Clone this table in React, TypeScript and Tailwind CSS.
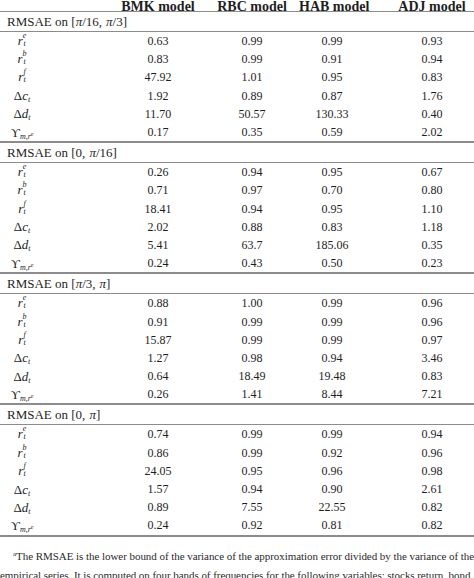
import React from "react";

const serif = { fontFamily: '"Liberation Serif", "DejaVu Serif", serif' };

function R({ sup }: { sup: string }) {
  return (
    <span className="italic">
      r
      <span className="inline-flex flex-col align-middle text-[8px] leading-[8px] not-italic -mt-[4px]">
        <span className="italic">{sup}</span>
        <span className="italic">t</span>
      </span>
    </span>
  );
}

function Delta({ v }: { v: string }) {
  return (
    <span>
      Δ<span className="italic">{v}</span>
      <sub className="italic text-[8px]">t</sub>
    </span>
  );
}

const Ups = (
  <span>
    ϒ
    <sub className="italic text-[8px]">
      m,r<sup className="text-[6px]">e</sup>
    </sub>
  </span>
);

const labels = [<R sup="e" />, <R sup="b" />, <R sup="f" />, <Delta v="c" />, <Delta v="d" />, Ups];

// second member of an interval, with the thin space LaTeX puts after the comma
const Pi = ({ tail = "" }: { tail?: string }) => (
  <>
    <i className="ml-[4px]">π</i>
    {tail}
  </>
);

const sections: { title: React.ReactNode; values: string[][] }[] = [
  {
    title: (
      <>
        RMSAE on [<i>π</i>/16,
        <Pi tail="/3]" />
      </>
    ),
    values: [
      ["0.63", "0.99", "0.99", "0.93"],
      ["0.83", "0.99", "0.91", "0.94"],
      ["47.92", "1.01", "0.95", "0.83"],
      ["1.92", "0.89", "0.87", "1.76"],
      ["11.70", "50.57", "130.33", "0.40"],
      ["0.17", "0.35", "0.59", "2.02"],
    ],
  },
  {
    title: (
      <>
        RMSAE on [0,
        <Pi tail="/16]" />
      </>
    ),
    values: [
      ["0.26", "0.94", "0.95", "0.67"],
      ["0.71", "0.97", "0.70", "0.80"],
      ["18.41", "0.94", "0.95", "1.10"],
      ["2.02", "0.88", "0.83", "1.18"],
      ["5.41", "63.7", "185.06", "0.35"],
      ["0.24", "0.43", "0.50", "0.23"],
    ],
  },
  {
    title: (
      <>
        RMSAE on [<i>π</i>/3,
        <Pi tail="]" />
      </>
    ),
    values: [
      ["0.88", "1.00", "0.99", "0.96"],
      ["0.91", "0.99", "0.99", "0.96"],
      ["15.87", "0.99", "0.99", "0.97"],
      ["1.27", "0.98", "0.94", "3.46"],
      ["0.64", "18.49", "19.48", "0.83"],
      ["0.26", "1.41", "8.44", "7.21"],
    ],
  },
  {
    title: (
      <>
        RMSAE on [0,
        <Pi tail="]" />
      </>
    ),
    values: [
      ["0.74", "0.99", "0.99", "0.94"],
      ["0.86", "0.99", "0.92", "0.96"],
      ["24.05", "0.95", "0.96", "0.98"],
      ["1.57", "0.94", "0.90", "2.61"],
      ["0.89", "7.55", "22.55", "0.82"],
      ["0.24", "0.92", "0.81", "0.82"],
    ],
  },
];

const grid = "grid grid-cols-[111px_94px_94px_66px_134px]";

export default function App() {
  return (
    <div className="w-[474px] h-[578px] overflow-hidden bg-white text-[#1e1e1e]" style={serif}>
      {/* header */}
      <div className={`${grid} h-[12px] items-end border-b border-[#8c8c8c] text-[14px] font-bold`}>
        <div />
        {["BMK model", "RBC model", "HAB model", "ADJ model"].map((h) => (
          <div key={h} className="text-center leading-none whitespace-nowrap -mb-[2px]">
            {h}
          </div>
        ))}
      </div>

      {sections.map((s, si) => (
        <div key={si} className={si > 0 ? "border-t-2 border-[#8c8c8c]" : ""}>
          <div className="h-[20px] flex items-center pl-[7px] text-[13px] border-b border-[#8c8c8c] whitespace-nowrap">
            {s.title}
          </div>
          <div>
            {s.values.map((vals, ri) => (
              <div key={ri} className={`${grid} h-[18.2px] items-center text-[12px]`}>
                <div className="w-[44px] text-center text-[13px] leading-none whitespace-nowrap">
                  {labels[ri]}
                </div>
                {vals.map((v, vi) => (
                  <div key={vi} className="text-center leading-none">
                    {v}
                  </div>
                ))}
              </div>
            ))}
          </div>
        </div>
      ))}

      <div className="border-t-2 border-[#8c8c8c] pt-[10px] text-[11px] leading-[19px] text-[#2a2a2a] whitespace-nowrap tracking-[-0.05px]">
        <p className="pl-[13px]">
          <sup className="text-[7px]">a</sup>The RMSAE is the lower bound of the variance of the approximation error divided by the
          variance of the
        </p>
        <p>
          empirical series. It is computed on four bands of frequencies for the following variables: stocks return, bond
        </p>
      </div>
    </div>
  );
}
